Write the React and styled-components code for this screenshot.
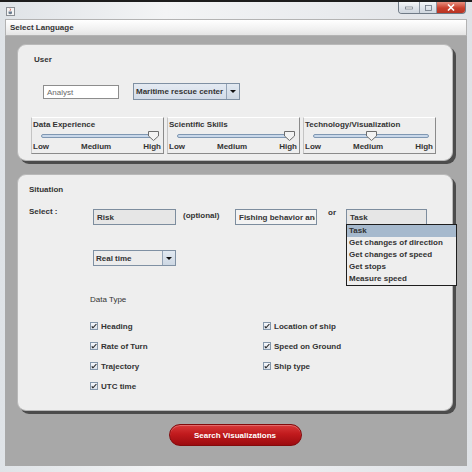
import React from 'react';
import styled, { createGlobalStyle } from 'styled-components';

const GlobalStyle = createGlobalStyle`
  html, body {
    margin: 0;
    padding: 0;
    width: 472px;
    height: 472px;
    overflow: hidden;
    background: #e6e8ea;
  }
  * {
    box-sizing: border-box;
  }
`;

const FONT = `"Liberation Sans", Arial, sans-serif`;

const Window = styled.div`
  width: 472px;
  height: 472px;
  display: flex;
  flex-direction: column;
  border-top: 2px solid #1d1d1d;
  background: linear-gradient(90deg, #dfe3e7 0%, #f3f4f5 35%, #e9ebee 70%, #dfe2e6 100%);
  font-family: ${FONT};
  color: #333;
`;

const TitleBar = styled.div`
  height: 17px;
  display: flex;
  justify-content: space-between;
  align-items: flex-start;
  padding: 0 6px 0 6px;
`;

const AppIcon = styled.div`
  width: 9px;
  height: 9px;
  margin-top: 5px;
  border: 1px solid #8b8f94;
  background: #f4f4f4;
  display: flex;
  align-items: center;
  justify-content: center;
`;

const Controls = styled.div`
  display: flex;
  height: 12px;
  border: 1px solid #6f7a86;
  border-top: none;
  border-radius: 0 0 4px 4px;
  overflow: hidden;
`;

const CtrlButton = styled.div`
  width: ${p => p.$w}px;
  height: 100%;
  display: flex;
  align-items: center;
  justify-content: center;
  border-left: ${p => (p.$first ? 'none' : '1px solid #8c96a1')};
  background: ${p =>
    p.$close
      ? 'linear-gradient(#e9907f, #c9402d 55%, #b83322)'
      : 'linear-gradient(#f4f6f8, #dfe4ea 50%, #cfd6de)'};
`;

const Frame = styled.div`
  flex: 1;
  display: flex;
  flex-direction: column;
  padding: 0 5px 6px 5px;
`;

const MenuBar = styled.div`
  height: 17px;
  display: flex;
  align-items: center;
  padding-left: 4px;
  border: 1px solid #b3b3b3;
  background: linear-gradient(#ffffff, #f1f1f1 60%, #e4e4e4);
  font-size: 8px;
  font-weight: bold;
`;

const Content = styled.div`
  flex: 1;
  display: flex;
  flex-direction: column;
  padding: 8px 14px 0 12px;
  background: #a8a8a8;
`;

const Panel = styled.div`
  height: ${p => p.$h}px;
  margin-top: ${p => p.$mt || 0}px;
  display: flex;
  flex-direction: column;
  padding: 9px 14px 0 ${p => p.$pl}px;
  background: #eeeeee;
  border: 1px solid #b9b9b9;
  border-radius: 9px;
  box-shadow: 3px 3px 0 #4c4c4c;
`;

const PanelTitle = styled.div`
  font-size: 8px;
  font-weight: bold;
  line-height: 12px;
  margin-left: ${p => p.$ml || 0}px;
`;

const Row = styled.div`
  display: flex;
  align-items: flex-start;
  margin-top: ${p => p.$mt || 0}px;
  margin-left: ${p => p.$ml || 0}px;
`;

const Label = styled.div`
  font-size: 8px;
  font-weight: ${p => (p.$light ? 'normal' : 'bold')};
  line-height: 12px;
  width: ${p => (p.$w ? `${p.$w}px` : 'auto')};
  margin-top: ${p => p.$mt || 0}px;
  margin-left: ${p => p.$ml || 0}px;
  flex-shrink: 0;
`;

const Field = styled.div`
  position: relative;
  width: ${p => p.$w}px;
  height: ${p => p.$h || 16}px;
  margin-top: ${p => p.$mt || 0}px;
  margin-left: ${p => p.$ml || 0}px;
  display: flex;
  align-items: center;
  padding-left: 3px;
  flex-shrink: 0;
  border: 1px solid ${p => (p.$plain ? '#8d8d8d' : '#7d8d9e')};
  background: ${p => p.$bg || '#ffffff'};
  font-size: 8px;
  font-weight: ${p => (p.$plain ? 'normal' : 'bold')};
  color: ${p => (p.$plain ? '#6a6a6a' : '#333')};
  white-space: nowrap;
`;

const FieldText = styled.span`
  display: block;
  width: 76px;
  overflow: hidden;
`;

const Combo = styled.div`
  width: ${p => p.$w}px;
  height: ${p => p.$h}px;
  margin-top: ${p => p.$mt || 0}px;
  margin-left: ${p => p.$ml || 0}px;
  display: flex;
  flex-shrink: 0;
  border: 1px solid #7f90a3;
  background: ${p => (p.$blue ? 'linear-gradient(#e4eaf2, #d3dce8)' : '#ececec')};
  font-size: 8px;
  font-weight: bold;
`;

const ComboText = styled.div`
  flex: 1;
  display: flex;
  align-items: center;
  padding-left: 2px;
  white-space: nowrap;
`;

const ComboArrow = styled.div`
  width: 13px;
  display: flex;
  align-items: center;
  justify-content: center;
  border-left: 1px solid #93a3b6;
  background: linear-gradient(#e2e9f1, #cdd7e3);

  &::after {
    content: '';
    border-left: 3px solid transparent;
    border-right: 3px solid transparent;
    border-top: 3px solid #111;
  }
`;

const SliderRow = styled.div`
  display: flex;
  gap: 3px;
  margin-top: 17px;
`;

const SliderGroup = styled.div`
  width: 133px;
  height: 37px;
  display: flex;
  flex-direction: column;
  padding: 0 1px;
  border: 1px solid;
  border-color: #ffffff #8a8a8a #8a8a8a #c4c4c4;
  font-size: 8px;
  font-weight: bold;
`;

const GroupTitle = styled.div`
  line-height: 11px;
  margin-top: 1px;
  white-space: nowrap;
`;

const SliderArea = styled.div`
  position: relative;
  height: 11px;
`;

const Track = styled.div`
  position: absolute;
  left: 8px;
  right: 5px;
  top: 4px;
  height: 4px;
  border: 1px solid #7f97b2;
  border-radius: 2px;
  background: #c9d8ea;
`;

const ThumbLane = styled.div`
  position: absolute;
  left: 12px;
  right: 9px;
  top: 0;
  bottom: 0;
`;

const Thumb = styled.svg`
  position: absolute;
  top: 1px;
  left: calc(${p => p.$value}% - 5.5px);
  width: 11px;
  height: 10px;
`;

const TickLabels = styled.div`
  display: flex;
  justify-content: space-between;
  line-height: 11px;
  padding-right: 1px;
`;

const Popup = styled.div`
  position: absolute;
  top: 100%;
  left: -1px;
  width: 111px;
  z-index: 5;
  display: flex;
  flex-direction: column;
  border: 1px solid #1e1e1e;
  background: #eeeeee;
`;

const PopupItem = styled.div`
  height: 12px;
  line-height: 12px;
  padding-left: 2px;
  font-size: 8px;
  font-weight: bold;
  color: #333;
  background: ${p => (p.$selected ? '#a6b9cd' : 'transparent')};
`;

const CheckGrid = styled.div`
  display: grid;
  grid-template-columns: 173px 150px;
  grid-template-rows: repeat(4, 20px);
  grid-auto-flow: column;
  margin-top: 10px;
  margin-left: 61px;
`;

const CheckItem = styled.div`
  display: flex;
  align-items: center;
  gap: 3px;
  font-size: 8px;
  font-weight: bold;
  height: 20px;
`;

const Box = styled.div`
  width: 8px;
  height: 8px;
  display: flex;
  align-items: center;
  justify-content: center;
  border: 1px solid #8497ab;
  background: linear-gradient(#f5f7fa, #dbe2eb);
`;

const Footer = styled.div`
  display: flex;
  justify-content: center;
  margin-top: 13px;
`;

const SearchButton = styled.button`
  width: 133px;
  height: 22px;
  border: 1px solid #830a0c;
  border-radius: 11px;
  background: linear-gradient(#d83a3a, #c11a1d 45%, #9c0b0f);
  box-shadow: inset 0 1px 0 rgba(255, 255, 255, 0.25);
  color: #fff;
  font-family: ${FONT};
  font-size: 8px;
  font-weight: bold;
  padding: 0;
`;

const sliders = [
  { title: 'Data Experience', value: 100 },
  { title: 'Scientific Skills', value: 100 },
  { title: 'Technology/Visualization', value: 50 },
];

const tasks = ['Task', 'Get changes of direction', 'Get changes of speed', 'Get stops', 'Measure speed'];

const dataTypes = [
  'Heading',
  'Rate of Turn',
  'Trajectory',
  'UTC time',
  'Location of ship',
  'Speed on Ground',
  'Ship type',
];

const Check = ({ label }) => (
  <CheckItem>
    <Box>
      <svg width="6" height="6" viewBox="0 0 6 6">
        <path d="M0.8 3.4 L2.2 5.2 M1.8 5 L5.4 1" stroke="#222" strokeWidth="1.1" fill="none" />
      </svg>
    </Box>
    {label}
  </CheckItem>
);

const Slider = ({ title, value }) => (
  <SliderGroup>
    <GroupTitle>{title}</GroupTitle>
    <SliderArea>
      <Track />
      <ThumbLane>
        <Thumb $value={value} viewBox="0 0 11 10">
          <path d="M0.5 0.5 H10.5 V5 L5.5 9.5 L0.5 5 Z" fill="#f3f3f3" stroke="#6e6e6e" />
        </Thumb>
      </ThumbLane>
    </SliderArea>
    <TickLabels>
      <span>Low</span>
      <span>Medium</span>
      <span>High</span>
    </TickLabels>
  </SliderGroup>
);

const App = () => {
  return (
    <Window>
      <GlobalStyle />
      <TitleBar>
        <AppIcon>
          <svg width="7" height="7" viewBox="0 0 7 7">
            <path d="M1.5 3.5 H5 V5.5 Q3.2 6.8 1.5 5.5 Z" fill="#6b7c8e" />
            <path d="M3 0.5 Q4 1.5 3 2.8" stroke="#c0392b" strokeWidth="0.8" fill="none" />
          </svg>
        </AppIcon>
        <Controls>
          <CtrlButton $w={20} $first>
            <svg width="8" height="4" viewBox="0 0 8 4">
              <rect x="0.5" y="1" width="7" height="2" fill="#f7f7f7" stroke="#5a6470" strokeWidth="0.6" />
            </svg>
          </CtrlButton>
          <CtrlButton $w={17}>
            <svg width="7" height="6" viewBox="0 0 7 6">
              <rect x="0.5" y="0.5" width="6" height="5" fill="none" stroke="#6a7480" strokeWidth="0.8" />
            </svg>
          </CtrlButton>
          <CtrlButton $w={29} $close>
            <svg width="8" height="7" viewBox="0 0 8 7">
              <path d="M1 0.5 L7 6.5 M7 0.5 L1 6.5" stroke="#ffffff" strokeWidth="1.6" />
            </svg>
          </CtrlButton>
        </Controls>
      </TitleBar>

      <Frame>
        <MenuBar>Select Language</MenuBar>
        <Content>
          <Panel $h={117} $pl={13}>
            <PanelTitle $ml={3}>User</PanelTitle>
            <Row $mt={17} $ml={12}>
              <Field $w={76} $h={14} $mt={2} $plain>Analyst</Field>
              <Combo $w={107} $h={17} $ml={14} $blue>
                <ComboText>Maritime rescue center</ComboText>
                <ComboArrow />
              </Combo>
            </Row>
            <SliderRow>
              {sliders.map(s => (
                <Slider key={s.title} title={s.title} value={s.value} />
              ))}
            </SliderRow>
          </Panel>

          <Panel $h={237} $pl={11} $mt={13}>
            <PanelTitle>Situation</PanelTitle>
            <Row $mt={13}>
              <Label $w={64} $mt={-3}>Select :</Label>
              <Field $w={83} $bg="#e6e6e6">Risk</Field>
              <Label $w={52} $ml={7} $mt={1}>(optional)</Label>
              <Field $w={82} $bg="#f3f3f3">
                <FieldText>Fishing behavior anal</FieldText>
              </Field>
              <Label $w={18} $ml={11} $mt={-2}>or</Label>
              <Field $w={81} $bg="#e6e6e6">
                Task
                <Popup>
                  {tasks.map((t, i) => (
                    <PopupItem key={t} $selected={i === 0}>{t}</PopupItem>
                  ))}
                </Popup>
              </Field>
            </Row>
            <Row $mt={25} $ml={64}>
              <Combo $w={83} $h={16}>
                <ComboText>Real time</ComboText>
                <ComboArrow />
              </Combo>
            </Row>
            <Label $ml={61} $mt={28} $light>Data Type</Label>
            <CheckGrid>
              {dataTypes.map(d => (
                <Check key={d} label={d} />
              ))}
            </CheckGrid>
          </Panel>

          <Footer>
            <SearchButton>Search Visualizations</SearchButton>
          </Footer>
        </Content>
      </Frame>
    </Window>
  );
};

export default App;
